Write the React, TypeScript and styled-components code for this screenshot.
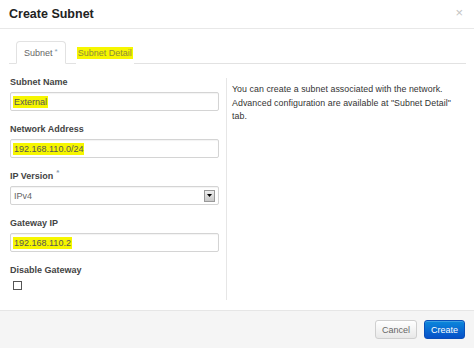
import styled, { createGlobalStyle } from 'styled-components';

const GlobalStyle = createGlobalStyle`
  html, body {
    margin: 0;
    padding: 0;
    background: #fff;
  }
  body {
    font-family: "Liberation Sans", Arial, Helvetica, sans-serif;
    color: #333;
  }
`;

const fields = [
  { label: 'Subnet Name', value: 'External' },
  { label: 'Network Address', value: '192.168.110.0/24' },
];

export default function App() {
  return (
    <Modal>
      <GlobalStyle />
      <Header>
        <Title>Create Subnet</Title>
        <Close>×</Close>
      </Header>
      <Content>
        <TabList>
          <Tab $active>
            Subnet <Req>*</Req>
          </Tab>
          <Tab>
            <Mark>Subnet Detail</Mark>
          </Tab>
        </TabList>
        <Body>
          <Form>
            {fields.map((f) => (
              <Field key={f.label}>
                <Label>{f.label}</Label>
                <Input>
                  <Mark $dark>{f.value}</Mark>
                </Input>
              </Field>
            ))}
            <Field>
              <Label>
                IP Version <Req>*</Req>
              </Label>
              <Select>
                <span>IPv4</span>
                <Arrow>
                  <svg width="5" height="3" viewBox="0 0 5 3">
                    <path d="M0 0h5L2.5 3z" fill="#000" />
                  </svg>
                </Arrow>
              </Select>
            </Field>
            <Field>
              <Label>Gateway IP</Label>
              <Input>
                <Mark $dark>192.168.110.2</Mark>
              </Input>
            </Field>
            <Field $last>
              <Label>Disable Gateway</Label>
              <Checkbox />
            </Field>
          </Form>
          <Help>
            You can create a subnet associated with the network. Advanced configuration are
            available at "Subnet Detail" tab.
          </Help>
        </Body>
      </Content>
      <Footer>
        <Button>Cancel</Button>
        <Button $primary>Create</Button>
      </Footer>
    </Modal>
  );
}

const Modal = styled.div`
  width: 474px;
  height: 348px;
  display: flex;
  flex-direction: column;
  overflow: hidden;
`;

const Header = styled.div`
  height: 29px;
  box-sizing: border-box;
  border-bottom: 1px solid #e8e8e8;
  padding: 0 9px;
  display: flex;
  align-items: center;
  justify-content: space-between;
`;

const Title = styled.h3`
  margin: 0;
  font-size: 12.5px;
  font-weight: bold;
  color: #222;
`;

const Close = styled.span`
  font-size: 13px;
  color: #c4c4c4;
  line-height: 1;
  margin-top: -4px;
  margin-right: 2px;
`;

const Content = styled.div`
  flex: 1;
  display: flex;
  flex-direction: column;
  padding: 11px 8px 0 9px;
`;

const TabList = styled.div`
  display: flex;
  align-items: flex-end;
  height: 23px;
  padding-left: 7px;
  border-bottom: 1px solid #e2e2e2;
`;

const Tab = styled.div<{ $active?: boolean }>`
  height: 23px;
  box-sizing: border-box;
  display: flex;
  align-items: center;
  font-size: 9px;
  color: #666;
  margin-bottom: -1px;
  padding: 0 ${(p) => (p.$active ? '7px' : '0')};
  margin-right: ${(p) => (p.$active ? '10px' : '0')};
  border: ${(p) => (p.$active ? '1px solid #e2e2e2' : '1px solid transparent')};
  border-bottom-color: ${(p) => (p.$active ? '#fff' : 'transparent')};
  border-radius: 4px 4px 0 0;
  background: #fff;
  gap: 2px;
`;

const Req = styled.span`
  color: #8aa0b4;
  font-size: 8px;
  margin-top: -3px;
`;

const Mark = styled.span<{ $dark?: boolean }>`
  background: #f6f600;
  color: ${(p) => (p.$dark ? '#555' : '#8c8c3a')};
  padding: 1px 1px;
`;

const Body = styled.div`
  flex: 1;
  display: flex;
`;

const Form = styled.div`
  width: 209px;
  padding-top: 12px;
  padding-left: 1px;
`;

const Field = styled.div<{ $last?: boolean }>`
  display: flex;
  flex-direction: column;
  margin-bottom: ${(p) => (p.$last ? '0' : '12px')};
`;

const Label = styled.label`
  height: 12px;
  line-height: 12px;
  font-size: 9px;
  font-weight: bold;
  color: #444;
  margin-bottom: 4px;
  display: flex;
  gap: 3px;
`;

const Input = styled.div`
  height: 19px;
  box-sizing: border-box;
  border: 1px solid #d4d4d4;
  border-radius: 2px;
  box-shadow: inset 0 1px 1px rgba(0, 0, 0, 0.05);
  display: flex;
  align-items: center;
  padding-left: 2px;
  font-size: 9px;
`;

const Select = styled(Input)`
  justify-content: space-between;
  padding-right: 3px;
  color: #666;
  span:first-child {
    padding-left: 1px;
  }
`;

const Arrow = styled.span`
  width: 11px;
  height: 12px;
  box-sizing: border-box;
  border: 1px solid #999;
  background: linear-gradient(#eee, #c8c8c8);
  display: flex;
  align-items: center;
  justify-content: center;
`;

const Checkbox = styled.span`
  width: 7px;
  height: 7px;
  margin-left: 3px;
  margin-top: 1px;
  border: 1px solid #555;
  background: #fff;
`;

const Help = styled.p`
  margin: 14px 0 10px 7px;
  padding: 5px 0 0 5px;
  border-left: 1px solid #e6e6e6;
  font-size: 8.8px;
  letter-spacing: 0.06px;
  line-height: 13.5px;
  color: #333;
  width: 220px;
`;

const Footer = styled.div`
  height: 38px;
  box-sizing: border-box;
  background: #f5f5f5;
  border-top: 1px solid #e6e6e6;
  display: flex;
  align-items: center;
  justify-content: flex-end;
  gap: 7px;
  padding-right: 9px;
`;

const Button = styled.button<{ $primary?: boolean }>`
  height: 19px;
  padding: 0 6px;
  font-family: inherit;
  font-size: 9px;
  border-radius: 3px;
  border: 1px solid ${(p) => (p.$primary ? '#0a4fb8' : '#cfcfcf')};
  color: ${(p) => (p.$primary ? '#fff' : '#666')};
  background: ${(p) =>
    p.$primary ? 'linear-gradient(#0a88dc, #0750c8)' : 'linear-gradient(#fff, #e8e8e8)'};
  box-shadow: inset 0 1px 0 rgba(255, 255, 255, 0.2);
`;
